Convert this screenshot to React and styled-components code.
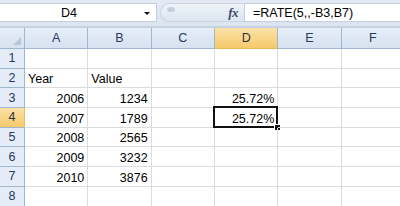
import React from 'react';
import styled, { createGlobalStyle, css } from 'styled-components';

const GlobalStyle = createGlobalStyle`
  html, body {
    margin: 0;
    padding: 0;
    background: #ffffff;
    overflow: hidden;
  }
  body {
    font-family: "Liberation Sans", Arial, sans-serif;
  }
`;

const COL_W = 63.33;
const ROW_H = 19.7;
const ROW_HEAD_W = 25;

const Window = styled.div`
  width: 400px;
  height: 206px;
  overflow: hidden;
  background: #ffffff;
`;

const FormulaBar = styled.div`
  height: 27px;
  box-sizing: border-box;
  display: flex;
  align-items: flex-start;
  padding-top: 3px;
  background: linear-gradient(#e3eaf3, #dbe4ef);
  border-bottom: 1px solid #c5d3e3;
`;

const NameBox = styled.div`
  position: relative;
  width: 157px;
  height: 19px;
  box-sizing: border-box;
  background: #ffffff;
  border: 1px solid #c2cfde;
  border-left: none;
  display: flex;
  align-items: center;
  justify-content: center;
  font-size: 12.5px;
  color: #000;
  padding-right: 18px;
`;

const DropArrow = styled.span`
  position: absolute;
  right: 6px;
  top: 8px;
  width: 0;
  height: 0;
  border-left: 3px solid transparent;
  border-right: 3px solid transparent;
  border-top: 3px solid #111;
`;

const Grip = styled.div`
  margin-left: 3px;
  width: 84px;
  height: 19px;
  box-sizing: border-box;
  border: 1px solid #c9d5e3;
  border-right: none;
  border-radius: 10px 0 0 10px;
  background: linear-gradient(#eef3f9, #dde6f0);
  display: flex;
  align-items: center;
  justify-content: flex-end;
  padding-right: 6px;
  position: relative;
`;

const GripDot = styled.span`
  position: absolute;
  left: 6px;
  top: 3px;
  width: 8px;
  height: 5px;
  border-radius: 50%;
  background: #c4cfdc;
`;

const Fx = styled.span`
  font-family: "Liberation Serif", "Times New Roman", serif;
  font-style: italic;
  font-weight: bold;
  font-size: 13px;
  color: #3b4b66;
  letter-spacing: -0.5px;
`;

const FormulaInput = styled.div`
  flex: 1;
  height: 19px;
  box-sizing: border-box;
  background: #ffffff;
  border: 1px solid #c2cfde;
  border-right: none;
  display: flex;
  align-items: center;
  padding-left: 8px;
  font-size: 12.5px;
  color: #000;
`;

const Sheet = styled.div`
  display: grid;
  grid-template-columns: ${ROW_HEAD_W}px repeat(6, ${COL_W}px);
  grid-template-rows: 21px repeat(8, ${ROW_H}px);
  border-top: 1px solid #c5d3e3;
`;

const headerBase = css`
  box-sizing: border-box;
  display: flex;
  align-items: center;
  justify-content: center;
  font-size: 12.5px;
  color: #27385a;
  border-right: 1px solid #9eb6ce;
  border-bottom: 1px solid #9eb6ce;
`;

const Corner = styled.div`
  ${headerBase};
  position: relative;
  background: linear-gradient(#e6eef8, #d6e2f0);
`;

const CornerTriangle = styled.span`
  position: absolute;
  right: 3px;
  bottom: 3px;
  width: 0;
  height: 0;
  border-left: 8px solid transparent;
  border-bottom: 8px solid #b8c7d8;
`;

const ColHeader = styled.div`
  ${headerBase};
  background: ${({ $active }) =>
    $active
      ? 'linear-gradient(#fbe2a7, #f6c96a)'
      : 'linear-gradient(#e6eef8, #d6e2f0)'};
  ${({ $active }) => $active && 'border-bottom: 1px solid #f0b95a; color: #2b3340;'}
`;

const RowHeader = styled.div`
  ${headerBase};
  background: ${({ $active }) =>
    $active ? 'linear-gradient(#fbe2a7, #f6c96a)' : '#e4ecf7'};
  ${({ $active }) => $active && 'border-right: 1px solid #f0b95a; color: #2b3340;'}
`;

const Cell = styled.div`
  position: relative;
  box-sizing: border-box;
  border-right: 1px solid #dadcdd;
  border-bottom: 1px solid #dadcdd;
  display: flex;
  align-items: flex-end;
  justify-content: ${({ $align }) => ($align === 'left' ? 'flex-start' : 'flex-end')};
  padding: 0 3px 1px 3px;
  font-size: 12.5px;
  color: #000;
  white-space: nowrap;
`;

const Selection = styled.span`
  position: absolute;
  left: -2px;
  top: -2px;
  right: -1px;
  bottom: -1px;
  border: 2px solid #111;
  pointer-events: none;
`;

const FillHandle = styled.span`
  position: absolute;
  right: -4px;
  bottom: -4px;
  width: 5px;
  height: 5px;
  background: #111;
  border: 1px solid #ffffff;
  border-right: none;
  border-bottom: none;
`;

const columns = ['A', 'B', 'C', 'D', 'E', 'F'];

const rows = [
  {},
  { A: ['Year', 'left'], B: ['Value', 'left'] },
  { A: ['2006'], B: ['1234'], D: ['25.72%'] },
  { A: ['2007'], B: ['1789'], D: ['25.72%'] },
  { A: ['2008'], B: ['2565'] },
  { A: ['2009'], B: ['3232'] },
  { A: ['2010'], B: ['3876'] },
  {},
];

const active = { col: 'D', row: 4 };

const App = () => (
  <Window>
    <GlobalStyle />
    <FormulaBar>
      <NameBox>
        D4
        <DropArrow />
      </NameBox>
      <Grip>
        <GripDot />
        <Fx>fx</Fx>
      </Grip>
      <FormulaInput>=RATE(5,,-B3,B7)</FormulaInput>
    </FormulaBar>
    <Sheet>
      <Corner>
        <CornerTriangle />
      </Corner>
      {columns.map((c) => (
        <ColHeader key={c} $active={c === active.col}>
          {c}
        </ColHeader>
      ))}
      {rows.map((row, i) => {
        const n = i + 1;
        return (
          <React.Fragment key={n}>
            <RowHeader $active={n === active.row}>{n}</RowHeader>
            {columns.map((c) => {
              const cell = row[c];
              const selected = c === active.col && n === active.row;
              return (
                <Cell key={c} $align={cell ? cell[1] : undefined}>
                  {cell ? cell[0] : null}
                  {selected && (
                    <Selection>
                      <FillHandle />
                    </Selection>
                  )}
                </Cell>
              );
            })}
          </React.Fragment>
        );
      })}
    </Sheet>
  </Window>
);

export default App;
